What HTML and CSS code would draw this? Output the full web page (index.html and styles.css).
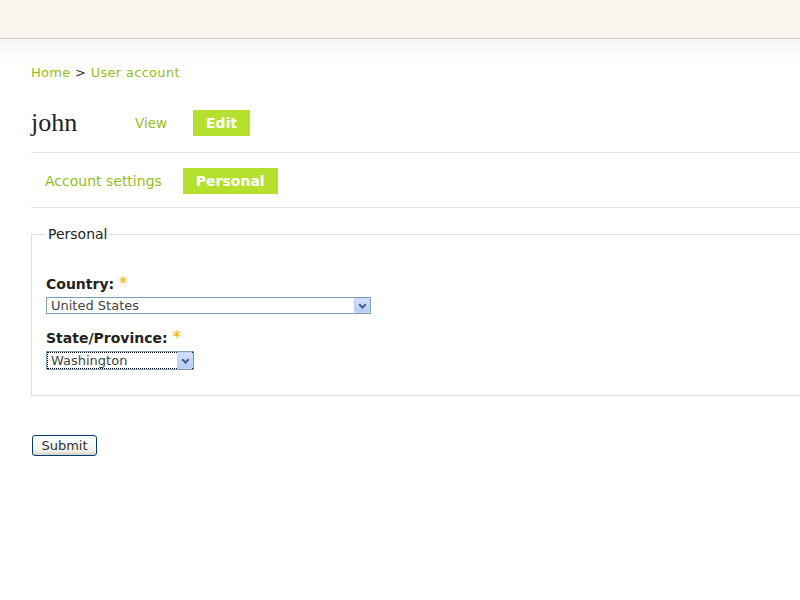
FILE: index.html
```html
<!DOCTYPE html>
<html lang="en">
<head>
    <meta charset="UTF-8">
    <title>john | User account</title>
    <link rel="stylesheet" href="styles.css">
</head>
<body>
    <div class="header"></div>

    <div class="main">
        <!-- Breadcrumb -->
        <div class="breadcrumb">
            <a href="#">Home</a> <span class="sep">&gt;</span> <a href="#">User account</a>
        </div>

        <!-- Primary tabs -->
        <div class="title-row">
            <h1 class="page-title">john</h1>
            <ul class="tabs primary">
                <li><a href="#">View</a></li>
                <li class="active"><a href="#">Edit</a></li>
            </ul>
        </div>

        <!-- Secondary tabs -->
        <ul class="tabs secondary">
            <li><a href="#">Account settings</a></li>
            <li class="active"><a href="#">Personal</a></li>
        </ul>

        <form class="user-form" onsubmit="return false">
            <fieldset>
                <legend>Personal</legend>

                <div class="form-item">
                    <label for="country">Country: <span class="required">*</span></label>
                    <div class="select-wrap wide">
                        <select id="country">
                            <option>United States</option>
                        </select>
                        <span class="select-arrow">
                            <svg width="9" height="6" viewBox="0 0 9 6"><path d="M1.2 1.2 L4.5 4.5 L7.8 1.2" fill="none" stroke="#4d6185" stroke-width="2.2"/></svg>
                        </span>
                    </div>
                </div>

                <div class="form-item">
                    <label for="state">State/Province: <span class="required">*</span></label>
                    <div class="select-wrap narrow focused">
                        <select id="state">
                            <option>Washington</option>
                        </select>
                        <span class="select-arrow">
                            <svg width="9" height="6" viewBox="0 0 9 6"><path d="M1.2 1.2 L4.5 4.5 L7.8 1.2" fill="none" stroke="#4d6185" stroke-width="2.2"/></svg>
                        </span>
                    </div>
                </div>
            </fieldset>

            <button type="submit" class="form-submit">Submit</button>
        </form>
    </div>
</body>
</html>
```

FILE: styles.css
```css
body {
    margin: 0;
    font-family: "DejaVu Sans", Verdana, sans-serif;
    font-size: 13px;
    line-height: 16px;
    color: #222;
    background: #fff;
    overflow: hidden;
}

a {
    color: #94bd1c;
    text-decoration: none;
}

.header {
    height: 38px;
    background-color: #f7f5ee;
    border-bottom: 1px solid #cccccc;
}

.main {
    padding: 26px 0 0 31px;
    background: linear-gradient(#f5f5f5, #fff 24px) no-repeat;
}

.breadcrumb {
    letter-spacing: 0.3px;
}

.breadcrumb .sep {
    color: #333;
}

/* Titulo + abas */
.title-row {
    display: flex;
    align-items: center;
    margin-top: 29px;
    padding-bottom: 16px;
    border-bottom: 1px solid #e6e9ec;
}

.page-title {
    margin: 0;
    width: 91px;
    font-family: "Liberation Serif", Georgia, serif;
    font-weight: normal;
    font-size: 26px;
    line-height: 26px;
    color: #222;
}

.tabs {
    list-style: none;
    margin: 0;
    padding: 0;
    display: flex;
}

.tabs a {
    display: block;
    padding: 0 13px;
    height: 26px;
    line-height: 26px;
}

.tabs .active a {
    background-color: #b5e12e;
    color: #fff;
    font-weight: bold;
}

.tabs.primary {
    gap: 13px;
    font-size: 13.5px;
}

.tabs.primary .active a {
    font-size: 14px;
}

.tabs.secondary {
    gap: 8px;
    margin-top: 15px;
    padding: 0 0 13px 1px;
    border-bottom: 1px solid #e6e9ec;
    font-size: 14px;
}

/* Formulario */
fieldset {
    margin: 18px 0 0 0;
    padding: 34px 14px 25px;
    border: 1px solid #dddddd;
    border-right: none;
}

legend {
    padding: 0 2px;
    font-size: 14px;
    color: #222;
}

.form-item + .form-item {
    margin-top: 16px;
}

.form-item label {
    display: block;
    font-weight: bold;
    font-size: 14px;
    margin-bottom: 5px;
}

.required {
    color: #ffaa00;
    font-weight: normal;
    font-size: 17px;
    line-height: 14px;
}

.select-wrap {
    position: relative;
    display: block;
}

.select-wrap select {
    appearance: none;
    -webkit-appearance: none;
    display: block;
    box-sizing: border-box;
    height: 17px;
    margin: 0;
    padding: 0 18px 0 4px;
    border: 1px solid #7f9db9;
    border-radius: 0;
    background: #fff;
    font-family: "DejaVu Sans", Verdana, sans-serif;
    font-size: 13px;
    line-height: 15px;
    color: #444;
}

.select-wrap.wide select {
    width: 325px;
}

.select-wrap.narrow select {
    width: 148px;
    height: 19px;
}

.select-wrap.focused select {
    outline: 1px dotted #000;
    outline-offset: -2px;
}

.select-arrow {
    position: absolute;
    top: 1px;
    left: 308px;
    width: 16px;
    height: 15px;
    box-sizing: border-box;
    border: 1px solid #c3d3fd;
    border-radius: 2px;
    background: linear-gradient(#d5e1fd, #b6cbf7);
    display: flex;
    align-items: center;
    justify-content: center;
}

.narrow .select-arrow {
    left: 131px;
    height: 17px;
}

.form-submit {
    display: block;
    margin: 39px 0 0 1px;
    width: 65px;
    height: 21px;
    padding: 0;
    border: 1px solid #003c74;
    border-radius: 3px;
    background: linear-gradient(#ffffff, #f0f0ea 80%, #d6d0c5);
    font-family: "DejaVu Sans", Verdana, sans-serif;
    font-size: 13px;
    color: #333;
    cursor: pointer;
}
```
